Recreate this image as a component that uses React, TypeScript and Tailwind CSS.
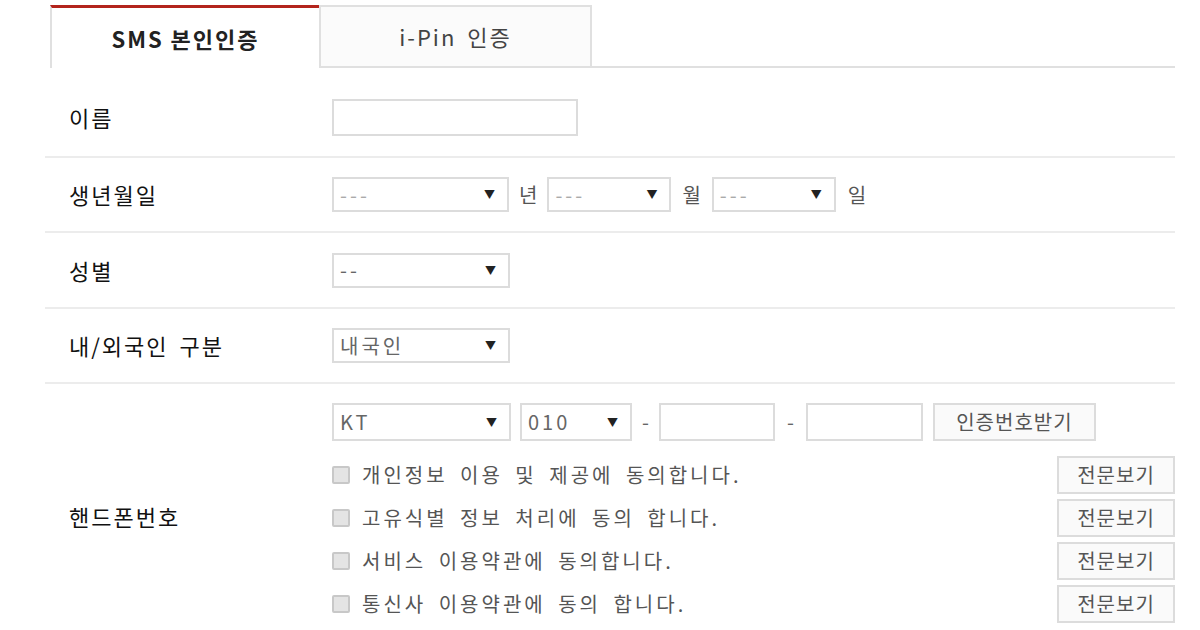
import React from 'react';

const font = { fontFamily: '"Noto Sans CJK KR", "Noto Sans", sans-serif' };

function Select({ value, width, muted, h = 'h-[35px]' }: { value: string; width: string; muted?: boolean; h?: string }) {
    return (
        <div className={`${width} ${h} border-2 border-[#dcdcdc] bg-white flex items-center justify-between pl-[6px] pr-3`}>
            <span className={`text-[20px] tracking-[3px] ${muted ? 'text-[#aaa]' : 'text-[#666]'}`}>{value}</span>
            <span className="text-[11px] text-[#222]">▼</span>
        </div>
    );
}

function Row({ label, height, pad, children }: { label: string; height: string; pad?: string; children: React.ReactNode }) {
    return (
        <div className={`flex items-center ${height} ${pad ?? ''} border-b-2 border-[#ececec]`}>
            <div className="w-[287px] pl-[24px] text-[22px] tracking-[2px] [word-spacing:4px] text-[#111]">{label}</div>
            <div className="flex-1">{children}</div>
        </div>
    );
}

const agreements = [
    '개인정보 이용 및 제공에 동의합니다.',
    '고유식별 정보 처리에 동의 합니다.',
    '서비스 이용약관에 동의합니다.',
    '통신사 이용약관에 동의 합니다.',
];

export default function App() {
    return (
        <div className="w-[1200px] h-[630px] bg-white overflow-hidden pl-[45px] pr-[25px]" style={font}>
            {/* Tabs */}
            <div className="flex pt-[5px] pl-[5px] h-[68px]">
                <div className="w-[269px] border-t-[3px] border-t-[#b3241c] border-l-2 border-l-[#e0e0e0] flex items-center justify-center bg-white">
                    <span className="text-[22px] font-semibold text-[#222] tracking-[2px]">SMS 본인인증</span>
                </div>
                <div className="w-[273px] border-2 border-[#e0e0e0] bg-[#fbfbfb] flex items-center justify-center">
                    <span className="text-[22px] text-[#444] tracking-[2px] [word-spacing:4px]">i-Pin 인증</span>
                </div>
                <div className="flex-1 border-b-2 border-[#e0e0e0]" />
            </div>

            <Row label="이름" height="h-[90px]" pad="pt-[10px]">
                <div className="w-[246px] h-[37px] border-2 border-[#dcdcdc]" />
            </Row>

            <Row label="생년월일" height="h-[75px]">
                <div className="flex items-center gap-[8px] text-[20px] text-[#555]">
                    <Select value="---" width="w-[177px]" muted />
                    <span className="mx-[2px]">년</span>
                    <Select value="---" width="w-[124px]" muted />
                    <span className="mx-[3px]">월</span>
                    <Select value="---" width="w-[124px]" muted />
                    <span className="ml-[4px]">일</span>
                </div>
            </Row>

            <Row label="성별" height="h-[76px]">
                <Select value="--" width="w-[178px]" />
            </Row>

            <Row label="내/외국인 구분" height="h-[75px]">
                <Select value="내국인" width="w-[178px]" />
            </Row>

            <div className="flex items-center h-[250px]">
                <div className="w-[287px] pl-[24px] text-[22px] tracking-[2px] text-[#111] pt-[14px]">핸드폰번호</div>
                <div className="flex-1 flex flex-col pt-[8px]">
                    <div className="flex items-center text-[20px] text-[#666]">
                        <Select value="KT" width="w-[179px]" h="h-[38px]" />
                        <div className="ml-[9px]"><Select value="010" width="w-[112px]" h="h-[38px]" /></div>
                        <span className="mx-[10px]">-</span>
                        <div className="w-[116px] h-[38px] border-2 border-[#dcdcdc]" />
                        <span className="mx-[12px]">-</span>
                        <div className="w-[117px] h-[38px] border-2 border-[#dcdcdc]" />
                        <button className="ml-[10px] w-[163px] h-[38px] border-2 border-[#dcdcdc] bg-[#fafafa] text-[20px] text-[#555] tracking-[1px]">인증번호받기</button>
                    </div>
                    <div className="flex flex-col gap-[5px] mt-[15px]">
                        {agreements.map(text => (
                            <div key={text} className="flex items-center h-[38px]">
                                <span className="w-[18px] h-[18px] border-2 border-[#c8c8c8] bg-[#e4e4e4] rounded-[2px]" />
                                <span className="ml-[12px] text-[20px] text-[#555] tracking-[3px] [word-spacing:5px] flex-1">{text}</span>
                                <button className="w-[118px] h-[38px] border-2 border-[#dcdcdc] bg-[#fafafa] text-[20px] text-[#555] tracking-[1px]">전문보기</button>
                            </div>
                        ))}
                    </div>
                </div>
            </div>
        </div>
    );
}
